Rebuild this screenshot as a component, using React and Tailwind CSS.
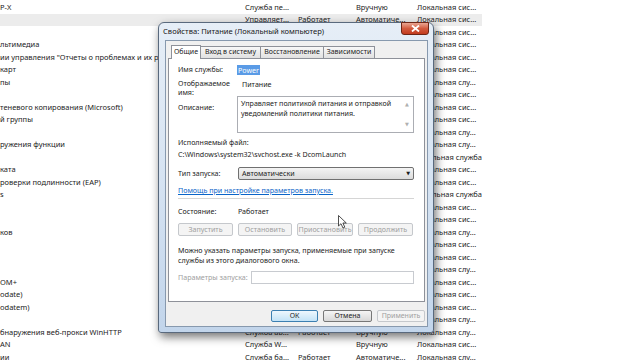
import React from 'react';
import clsx from 'clsx';

const SIS = 'Локальная сис...';
const SLU = 'Локальная слу...';
const SLUZ = 'Локальная служба';

// name, description, status, startup, log on as
const rows = [
    ['P-X', 'Служба пе...', '', 'Вручную', SIS],
    ['', 'Управляет...', 'Работает', 'Автоматиче...', SIS],
    ['', '', '', '', SIS],
    ['льтимедиа', '', '', '', SIS],
    ['ии управления "Отчеты о проблемах и их р', '', '', '', SIS],
    ['карт', '', '', '', SIS],
    ['пы', '', '', '', SLU],
    ['', '', '', '', SIS],
    ['теневого копирования (Microsoft)', '', '', '', SIS],
    ['й группы', '', '', '', SIS],
    ['', '', '', '', SLU],
    ['ружения функции', '', '', '', SLU],
    ['', '', '', '', SLUZ],
    ['ката', '', '', '', SIS],
    ['роверки подлинности (EAP)', '', '', '', SIS],
    ['s', '', '', '', SLUZ],
    ['', '', '', '', SIS],
    ['', '', '', '', SIS],
    ['ков', '', '', '', SLU],
    ['', '', '', '', SIS],
    ['', '', '', '', SIS],
    ['', '', '', '', SLU],
    ['OM+', '', '', '', SIS],
    ['odate)', '', '', '', SIS],
    ['odatem)', '', '', '', SIS],
    ['', '', '', '', SLU],
    ['бнаружения веб-прокси WinHTTP', 'Служба ав...', 'Работает', 'Вручную', SLU],
    ['AN', 'Служба W...', '', 'Вручную', SIS],
    ['ии', 'Служба ба...', 'Работает', 'Автоматиче...', SLU],
];

function Btn({ children, disabled, def, className }) {
    return (
        <div
            className={clsx(
                'flex items-center justify-center rounded-[2px] border h-full whitespace-nowrap',
                disabled && 'border-[#c5c8cc] bg-[#f4f4f4] text-[#a0a0a0]',
                def && 'border-[#3c7fb1] bg-linear-to-b from-[#eef7fd] to-[#c3e3f7] text-[#1e1e1e]',
                !disabled && !def && 'border-[#777] bg-linear-to-b from-[#f5f5f5] to-[#d8d8d8] text-[#1e1e1e]',
                className
            )}
        >
            {children}
        </div>
    );
}

function Tab({ children, active, first, className }) {
    return (
        <div
            className={clsx(
                'flex items-center justify-center whitespace-nowrap border-t border-r border-[#8e9199]',
                first && 'border-l',
                active
                    ? 'h-[14px] bg-white relative z-10 -mb-px'
                    : 'h-[12px] bg-linear-to-b from-[#f8f8f8] to-[#e1e1e1]',
                className
            )}
        >
            {children}
        </div>
    );
}

export default function App() {
    return (
        <div className="relative w-[640px] h-[360px] overflow-hidden bg-white font-['Noto_Sans','DejaVu_Sans',sans-serif] text-[#1c1c1c]">
            {/* Services list behind the dialog */}
            <div className="flex flex-col pt-px text-[7.5px]">
                {rows.map((r, i) => (
                    <div key={i} className={clsx('flex items-center h-[12.5px] w-[482px] whitespace-nowrap', i === 1 && 'bg-[#ececec]')}>
                        <div className="w-[158px] overflow-hidden">{r[0]}</div>
                        <div className="w-[87px]" />
                        <div className="w-[53px]">{r[1]}</div>
                        <div className="w-[58px]">{r[2]}</div>
                        <div className="w-[61px]">{r[3]}</div>
                        <div className="flex-1">{r[4]}</div>
                    </div>
                ))}
            </div>

            {/* Properties dialog */}
            <div className="absolute left-[158px] top-[22px] w-[276px] h-[311px] flex flex-col rounded-t-[6px] rounded-b-[3px] border border-[#59697d] bg-linear-to-b from-[#e6eef7] via-[#d6e3f2] to-[#c2d5eb] shadow-[2px_4px_10px_rgba(0,0,0,0.55)]">
                <div className="h-[19px] flex items-center pl-[4px] text-[7.6px] text-[#1a1a1a] whitespace-nowrap">
                    Свойства: Питание (Локальный компьютер)
                </div>
                <div className="absolute left-[242px] -top-px w-[28px] h-[13px] rounded-b-[3px] border border-[#6e2617] bg-linear-to-b from-[#e9a592] via-[#d25a3e] to-[#c23b1e] flex items-center justify-center">
                    <svg width="9" height="7" viewBox="0 0 9 7">
                        <path d="M1 0.5 L8 6.5 M8 0.5 L1 6.5" stroke="#fff" strokeWidth="1.8" />
                    </svg>
                </div>

                <div className="flex-1 ml-[6px] mr-[5px] mb-[5px] border border-[#8799ae] bg-[#f0f0f0] flex flex-col pt-[4px] px-[2px] pb-[4px] text-[7px]">
                    <div className="flex items-end pl-[3px]">
                        <Tab active first className="w-[30px]">Общие</Tab>
                        <Tab className="w-[60px]">Вход в систему</Tab>
                        <Tab className="w-[63px]">Восстановление</Tab>
                        <Tab className="w-[51px]">Зависимости</Tab>
                    </div>

                    <div className="h-[244px] border border-[#8e9199] bg-white flex flex-col pt-[5px] pl-[9px] pr-[10px] text-[7.1px]">
                        <div className="flex items-center h-[11px]">
                            <div className="w-[59px]">Имя службы:</div>
                            <div className="bg-[#5a9be6] text-white px-[1px] leading-[10px]">Power</div>
                        </div>
                        <div className="flex mt-[4px] h-[17px]">
                            <div className="w-[59px] leading-[8.5px]">Отображаемое<br />имя:</div>
                            <div className="pl-[5px] leading-[9px] pt-px">Питание</div>
                        </div>
                        <div className="flex h-[37px]">
                            <div className="w-[59px] pt-[6px]">Описание:</div>
                            <div className="flex-1 flex border border-[#abadb3] bg-white">
                                <div className="flex-1 pl-[3px] pt-[1px] leading-[10px]">
                                    Управляет политикой питания и отправкой<br />уведомлений политики питания.
                                </div>
                                <div className="w-[12px] flex flex-col items-center justify-between py-[4px] text-[5px] text-[#b0b0b0]">
                                    <span>▲</span>
                                    <span>▼</span>
                                </div>
                            </div>
                        </div>
                        <div className="mt-[4px] h-[10px] leading-[10px]">Исполняемый файл:</div>
                        <div className="mt-[2px] h-[10px] leading-[10px]">C:\Windows\system32\svchost.exe -k DcomLaunch</div>
                        <div className="flex items-center mt-[8px] h-[13px]">
                            <div className="w-[60px]">Тип запуска:</div>
                            <div className="flex-1 h-full flex items-center justify-between border border-[#707070] rounded-[2px] bg-linear-to-b from-[#f4f4f4] to-[#dcdcdc] pl-[3px] pr-[3px]">
                                <span>Автоматически</span>
                                <span className="text-[5px]">▼</span>
                            </div>
                        </div>
                        <div className="mt-[5px] h-[10px] leading-[10px] text-[#0a64c8] underline">
                            Помощь при настройке параметров запуска.
                        </div>
                        <div className="mt-[3px] h-px bg-[#d5d5d5]" />
                        <div className="flex items-center mt-[7px] h-[10px]">
                            <div className="w-[60px]">Состояние:</div>
                            <div>Работает</div>
                        </div>
                        <div className="flex gap-[5px] mt-[7px] h-[13px]">
                            <Btn disabled className="w-[55px]">Запустить</Btn>
                            <Btn disabled className="w-[54px]">Остановить</Btn>
                            <Btn disabled className="w-[56px]">Приостановить</Btn>
                            <Btn disabled className="w-[55px]">Продолжить</Btn>
                        </div>
                        <div className="mt-[9px] leading-[10px] whitespace-nowrap">
                            Можно указать параметры запуска, применяемые при запуске<br />
                            службы из этого диалогового окна.
                        </div>
                        <div className="flex items-center mt-[6px] h-[13px]">
                            <div className="w-[73px] text-[#a0a0a0] whitespace-nowrap">Параметры запуска:</div>
                            <div className="flex-1 h-full border border-[#c8cbd0] bg-white" />
                        </div>
                    </div>

                    <div className="flex justify-end gap-[5px] mt-[8px] h-[12px]">
                        <Btn def className="w-[47px]">ОК</Btn>
                        <Btn className="w-[49px]">Отмена</Btn>
                        <Btn disabled className="w-[48px]">Применить</Btn>
                    </div>
                </div>
            </div>

            {/* mouse pointer */}
            <svg className="absolute left-[338px] top-[215px]" width="10" height="14" viewBox="0 0 10 14">
                <path d="M0.5 0.5 L0.5 11 L3 8.7 L5 13 L6.8 12.2 L4.9 8 L8.3 8 Z" fill="#fff" stroke="#222" strokeWidth="0.8" />
            </svg>
        </div>
    );
}
